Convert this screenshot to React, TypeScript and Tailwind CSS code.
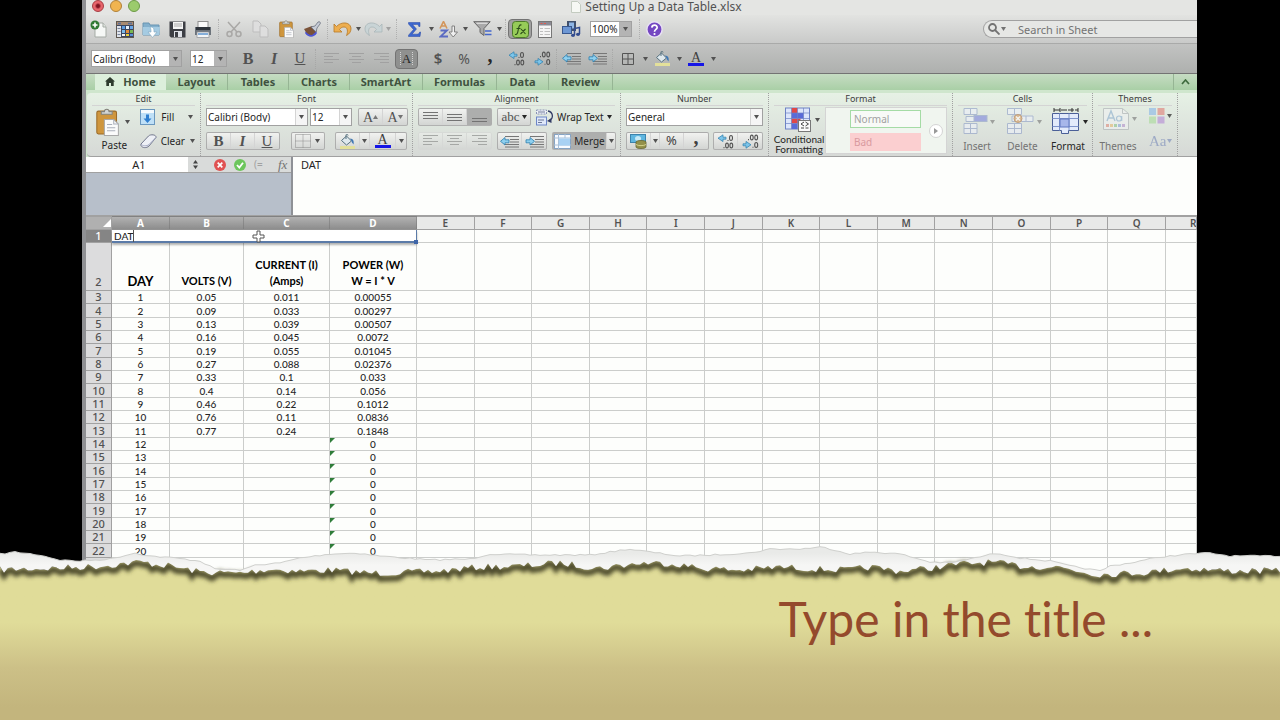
import React from "react";

type Kids = { children?: React.ReactNode };

/* ---------- small building blocks ---------- */

function Caret({ className = "w-2 text-neutral-600" }: { className?: string }) {
  return (
    <span className={`flex shrink-0 items-center justify-center ${className}`}>
      <svg width="5" height="4" viewBox="0 0 5 4" aria-hidden="true">
        <path d="M0 0h5L2.500 4z" fill="currentColor" />
      </svg>
    </span>
  );
}

function Tool({ label, className = "w-[26px]", children }: Kids & { label: string; className?: string }) {
  return (
    <button type="button" aria-label={label} className={`flex h-5 shrink-0 items-center justify-center ${className}`}>
      {children}
    </button>
  );
}

function Rule({ className = "mx-2" }: { className?: string }) {
  return <span className={`h-5 w-0 shrink-0 border-l border-dotted border-neutral-400/70 ${className}`} />;
}

function Combo({
  label,
  value,
  className,
  arrow = "w-3 bg-[#b4b4b4]",
}: {
  label: string;
  value: string;
  className: string;
  arrow?: string;
}) {
  return (
    <label className={`flex shrink-0 border border-neutral-400 bg-white ${className}`}>
      <select
        aria-label={label}
        defaultValue={value}
        className="min-w-0 flex-1 appearance-none bg-white pl-px text-[10px] leading-none text-neutral-800 outline-none"
      >
        <option>{value}</option>
      </select>
      <Caret className={`text-neutral-600 ${arrow}`} />
    </label>
  );
}

function Lines({ rows, className = "text-neutral-500" }: { rows: [number, number, number][]; className?: string }) {
  return (
    <svg width="15" height="14" viewBox="0 0 15 14" className={className} aria-hidden="true">
      {rows.map(([x, y, w]) => (
        <rect key={y} x={x} y={y} width={w} height="1" fill="currentColor" />
      ))}
    </svg>
  );
}

const LEFT: [number, number, number][] = [[0, 1, 15], [0, 4, 9], [0, 7, 15], [0, 10, 9]];
const MIDDLE: [number, number, number][] = [[0, 1, 15], [3, 4, 9], [0, 7, 15], [3, 10, 9]];
const RIGHT: [number, number, number][] = [[0, 1, 15], [6, 4, 9], [0, 7, 15], [6, 10, 9]];

/* ---------- icons ---------- */

function NewDoc() {
  return (
    <svg width="18" height="18" viewBox="0 0 18 18">
      <path d="M5 3h8l3 4v10H5z" fill="#f6f8f6" stroke="#a5aba5" />
      <path d="M13 3v4h3" fill="#dfe5df" stroke="#a5aba5" />
      <circle cx="5" cy="5" r="4.500" fill="#2f7a34" />
      <path d="M5 2.500v5M2.500 5h5" stroke="#fff" strokeWidth="1.600" />
    </svg>
  );
}
function Gallery() {
  return (
    <svg width="18" height="17" viewBox="0 0 18 17">
      <rect x=".5" y=".5" width="17" height="16" fill="#3b4560" stroke="#5d564f" />
      <rect x="1" y="1" width="16" height="3" fill="#a98a70" />
      <path d="M2 2.500h3M12 2.500h4" stroke="#5a6f9c" strokeWidth="1.500" />
      <rect x="1" y="5" width="4" height="11" fill="#dfe3ea" />
      <path d="M1.500 7.500h3M1.500 10.500h3M1.500 13.500h3" stroke="#7b869c" />
      <rect x="6" y="5" width="3" height="3" fill="#5a9be0" />
      <rect x="10" y="5" width="3" height="3" fill="#e8f0fa" />
      <rect x="14" y="5" width="3" height="3" fill="#6aa7e8" />
      <rect x="6" y="9" width="3" height="3" fill="#7ab8ea" />
      <rect x="10" y="9" width="3" height="3" fill="#e08a3a" />
      <rect x="14" y="9" width="3" height="3" fill="#77b752" />
      <rect x="6" y="13" width="3" height="2" fill="#f4f4f4" />
      <rect x="10" y="13" width="3" height="2" fill="#e8cf3b" />
      <rect x="14" y="13" width="3" height="2" fill="#5a8fd8" />
    </svg>
  );
}
function OpenFolder() {
  return (
    <svg width="18" height="17" viewBox="0 0 18 17">
      <path d="M1 14V2h6l1 2h9v10z" fill="#83b0cd" stroke="#6994b2" />
      <path d="M1 6h17l-1 8H1z" fill="#a5cbe2" />
      <path d="M8 6c4 0 4 2 4 5h3l-4.500 5.500L6 11h3c0-2 0-3-1-5z" fill="#fff" stroke="#7fa6c0" strokeWidth=".6" />
    </svg>
  );
}
function Save() {
  return (
    <svg width="17" height="17" viewBox="0 0 17 17">
      <path d="M.5.5h16v16H2L.5 15z" fill="#3d3f45" />
      <rect x="4" y="1" width="10" height="7" fill="#f5f5f5" />
      <path d="M5 3h8M5 5h8" stroke="#a9a9a9" />
      <rect x="5" y="10" width="8" height="6" fill="#dfe2e8" />
      <rect x="6" y="11" width="3" height="5" fill="#3d3f45" />
    </svg>
  );
}
function Printer() {
  return (
    <svg width="18" height="17" viewBox="0 0 18 17">
      <rect x="4" y=".5" width="10" height="7" fill="#fafafa" stroke="#909090" />
      <path d="M1 6h16v8H1z" fill="#6c737b" />
      <path d="M2 6h14v3H2z" fill="#2f343b" />
      <rect x="3" y="11" width="12" height="5.500" fill="#f3f5f7" stroke="#8b8f95" strokeWidth=".7" />
      <path d="M4 13h10" stroke="#5f96d0" strokeWidth="1.500" />
    </svg>
  );
}
function Scissors() {
  return (
    <svg width="16" height="17" viewBox="0 0 16 17" fill="none" stroke="#a9a8a6" strokeWidth="1.500">
      <path d="M2 1l9 10M14 1L5 11" />
      <circle cx="3.500" cy="13" r="2.500" />
      <circle cx="12.500" cy="13" r="2.500" />
    </svg>
  );
}
function Copy() {
  return (
    <svg width="17" height="18" viewBox="0 0 17 18" fill="#dedede" stroke="#bdbdbd">
      <path d="M1 1h5l3 3v8H1z" />
      <path d="M8 6h5l3 3v8H8z" />
    </svg>
  );
}
function Clipboard({ width = 17, height = 18 }: { width?: number; height?: number }) {
  return (
    <svg width={width} height={height} viewBox="0 0 22 27">
      <rect x=".7" y="3" width="19" height="22" rx="1.500" fill="#cf963d" stroke="#9b6b29" />
      <path d="M5 6V3.500h3C8 .500 12.500.500 12.500 3.500h3V6z" fill="#d3d6d6" stroke="#83827a" />
      <path d="M8 11h9l4.500 4.500V26.500H8z" fill="#fbfbfb" stroke="#a9a9a9" />
      <path d="M17 11v4.500h4.500M10.500 16h5M10.500 19h8M10.500 22h8" fill="none" stroke="#aab0bb" />
    </svg>
  );
}
function Painter() {
  return (
    <svg width="18" height="17" viewBox="0 0 18 17">
      <path d="M2 12c3 5 9 5 12 0l-3-5-7 1z" fill="#4d55d4" />
      <path d="M1 8l8-3 5 5-5 4c-3 0-6-2-8-6z" fill="#7a5238" />
      <path d="M8 6l4-1 3-4c2-1 3 1 2 2l-3 4-1 4z" fill="#c7ccd6" stroke="#6a7180" strokeWidth=".8" />
    </svg>
  );
}
function Undo({ color = "#edae50", edge = "#b67827", flip = false }) {
  return (
    <svg width="19" height="14" viewBox="0 0 19 14">
      <path
        transform={flip ? "matrix(-1 0 0 1 19 0)" : undefined}
        d="M1 2l2.500 2.500C8-.5 17-.5 18 6c.3 3-1.500 6-4.500 7.500C15 10 15 5 11 5 9 5 7.500 6 6.500 7.500L9 10H1z"
        fill={color}
        stroke={edge}
        strokeWidth=".8"
      />
    </svg>
  );
}
function Sigma() {
  return (
    <svg width="13" height="15" viewBox="0 0 13 15">
      <path d="M.5.5h11.500v4h-1.200C10.500 3 10 2.500 8.500 2.500H4.500L8.500 7 4 12.200h5c1.500 0 2.200-.6 2.700-2.200h1L12 14.500H.5v-1.300L5.500 7.500.5 2z" fill="#3c67cf" stroke="#2747a4" strokeWidth=".5" />
    </svg>
  );
}
function Sort() {
  return (
    <svg width="19" height="17" viewBox="0 0 19 17">
      <path d="M1 7.500L4.500.5 8 7.500M2.500 5h4" fill="none" stroke="#d3955a" strokeWidth="1.600" />
      <path d="M1.500 9.500H8l-6.500 6H9" fill="none" stroke="#5b6bc2" strokeWidth="1.800" />
      <path d="M13 5h2.500v6h3L14.200 16 10 11h3z" fill="#f0f0f0" stroke="#777" strokeWidth=".9" />
    </svg>
  );
}
function Funnel() {
  return (
    <svg width="19" height="16" viewBox="0 0 19 16">
      <path d="M.7.7h16.500L11 7.500v7L7 11.500v-4z" fill="#a9a9a9" stroke="#666" />
      <path d="M3.500 2.200h11" stroke="#eee" />
      <path d="M12 10h6.500M12 13.500h6.500" stroke="#4567cb" strokeWidth="1.700" />
    </svg>
  );
}
function FormulaTile() {
  return (
    <svg width="17" height="17" viewBox="0 0 17 17">
      <rect x=".5" y=".5" width="16" height="16" rx="3" fill="#96cc58" stroke="#4d7a2b" />
      <path d="M3 13.500c2.500.5 2.700-2 3.300-5S7.300 3.500 9.500 4M4.500 7.500h4M9 8l4.500 5M13.500 8L8.500 13" fill="none" stroke="#2c4d1a" strokeWidth="1.100" />
    </svg>
  );
}
function Toolbox() {
  return (
    <svg width="14" height="17" viewBox="0 0 14 17">
      <rect x=".5" y=".5" width="13" height="16" fill="#f5f5f5" stroke="#777" />
      <rect x="1" y="1" width="12" height="3.500" fill="#8b8a94" />
      <path d="M2.500 2.500h2M6 2.500h2" stroke="#e35b4e" strokeWidth="1.200" />
      <path d="M2 7.500h3M6.500 7.500H12M2 10.500h3M6.500 10.500H12M2 13.500h3M6.500 13.500H12" stroke="#bfbfbf" />
    </svg>
  );
}
function Media() {
  return (
    <svg width="19" height="17" viewBox="0 0 19 17">
      <rect x="5" y="0" width="9" height="10" fill="#40506d" />
      <rect x="7" y="1.500" width="5" height="6" fill="#8fb6e6" />
      <rect x=".5" y="5.500" width="9" height="7" fill="#6d97d4" stroke="#38578e" />
      <path d="M12.500 14V7.500l5-1V13" fill="none" stroke="#334c8f" strokeWidth="1.500" />
      <ellipse cx="11" cy="14.300" rx="2" ry="1.600" fill="#334c8f" />
      <ellipse cx="16" cy="13.300" rx="2" ry="1.600" fill="#334c8f" />
    </svg>
  );
}
function Help() {
  return (
    <svg width="17" height="17" viewBox="0 0 16 16">
      <circle cx="8" cy="8" r="7.200" fill="#7446c2" stroke="#e8e0f4" strokeWidth="1.400" />
      <path d="M5.500 6.200c.2-3.200 5.300-3 5 0C10.300 7.800 8 8 8 10" fill="none" stroke="#fff" strokeWidth="1.600" />
      <circle cx="8" cy="12.200" r="1" fill="#fff" />
    </svg>
  );
}
function Decimal({ more }: { more: boolean }) {
  return (
    <svg width="17" height="15" viewBox="0 0 17 15" aria-hidden="true">
      <path
        d={more ? "M6 .8v2.400h3v2H6v2.400L1 4.200z" : "M4 7.400v2.400H1v2h3v2.400L9 10.800z"}
        fill="#7cc5ea"
        stroke="#2c7eae"
        strokeWidth=".7"
      />
      <g fill="none" stroke="#555" strokeWidth="1.100">
        {more ? (
          <>
            <ellipse cx="14" cy="4" rx="1.500" ry="2.500" />
            <ellipse cx="10" cy="11.500" rx="1.400" ry="2.400" />
            <ellipse cx="14.300" cy="11.500" rx="1.400" ry="2.400" />
            <path d="M10.500 6.500h1M6.500 13.600h1" />
          </>
        ) : (
          <>
            <ellipse cx="9.800" cy="3.500" rx="1.400" ry="2.400" />
            <ellipse cx="14.200" cy="3.500" rx="1.400" ry="2.400" />
            <ellipse cx="14.200" cy="11" rx="1.500" ry="2.500" />
            <path d="M6 5.600h1M10.500 13.200h1" />
          </>
        )}
      </g>
    </svg>
  );
}
function Indent({ out = false }: { out?: boolean }) {
  return (
    <svg width="19" height="13" viewBox="0 0 19 13" aria-hidden="true">
      <path d="M5 1.500h14M10 4.500h9M10 7h9M5 9.500h14M5 12h14" stroke="#777" />
      <path
        d={out ? "M5 2.500v2.300h4v3H5V10L.5 6.300z" : "M5 2.500v2.300H1v3h4V10l4.500-3.700z"}
        fill="#8fd0ef"
        stroke="#2c7eae"
        strokeWidth=".8"
      />
    </svg>
  );
}
function BorderGrid({ dotted = false }: { dotted?: boolean }) {
  return dotted ? (
    <svg width="16" height="14" viewBox="0 0 16 14" fill="none" stroke="#888">
      <path d="M.5.5h15v13H.5zM8 .5v13M.5 7h15" strokeDasharray="1 1" />
    </svg>
  ) : (
    <svg width="12" height="12" viewBox="0 0 12 12" fill="none" stroke="#555">
      <path d="M.5.5h11v11H.5zM6 .5v11M.5 6h11" />
    </svg>
  );
}
function Bucket() {
  return (
    <svg width="17" height="15" viewBox="0 0 17 15">
      <path d="M2.500 6.500l5-4.500 5 5-5 4z" fill="#dfe9ee" stroke="#56707e" />
      <path d="M7 5V1c0-1 2-1 2 .5" fill="none" stroke="#56707e" />
      <path d="M11 4.500c4 0 4 4 3.500 6-1-1.500-2-2-2-3.500z" fill="#3f78b5" />
      <rect x="1" y="12" width="15" height="3" fill="#e3e09a" />
    </svg>
  );
}
function FontColor() {
  return (
    <span className="flex flex-col items-center font-['Liberation_Serif',serif] text-[14px] leading-[11px] text-neutral-700">
      A
      <span className="h-[3px] w-4 bg-[#1616e6]" />
    </span>
  );
}
function Eraser() {
  return (
    <svg width="17" height="15" viewBox="0 0 17 15">
      <path d="M1 10L8.500 2c2-2 8-1.500 7.500 1.500L9 12c-3 3-9 1.500-8-2z" fill="#eef0f6" stroke="#70758a" />
      <path d="M1 10c1 2 6 2.500 8 .5l7-7" fill="none" stroke="#a4abc4" />
    </svg>
  );
}
function FillDown() {
  return (
    <svg width="15" height="16" viewBox="0 0 15 16">
      <rect x=".5" y=".5" width="14" height="15" fill="#bfe0f7" stroke="#6b98bf" />
      <rect x="1" y="1" width="13" height="3" fill="#f5fafd" />
      <path d="M6 5.500h3v4h2.500l-4 4.500-4-4.500H6z" fill="#2f7fd0" />
    </svg>
  );
}
function Wrap() {
  return (
    <svg width="18" height="17" viewBox="0 0 18 17">
      <path d="M.5 1h10v4H.5z" fill="#f1f3fa" stroke="#8993b5" strokeDasharray="2 1" />
      <rect x=".5" y="8" width="10" height="8" fill="#dfe8f9" stroke="#6d86c8" />
      <path d="M2 3h7M2 11h6M2 13.500h4" stroke="#6d7898" />
      <path d="M12 2c5 1 6 7 1.500 9.500" fill="none" stroke="#333c66" strokeWidth="1.300" />
      <path d="M11 12l4.500-3v5z" fill="#333c66" />
    </svg>
  );
}
function MergeCells() {
  return (
    <svg width="17" height="15" viewBox="0 0 17 15">
      <rect x=".5" y=".5" width="16" height="14" fill="#f8fbff" stroke="#86a4c4" />
      <path d="M4.500 0v15M11 0v4M0 4h17M0 11h17" stroke="#a9c0d8" />
      <rect x="5" y="4.500" width="11" height="7" fill="#a8d1f3" />
    </svg>
  );
}
function Currency() {
  return (
    <svg width="17" height="15" viewBox="0 0 17 15">
      <rect x=".5" y=".5" width="15" height="8" fill="#5fb6e0" stroke="#3c83ad" />
      <ellipse cx="8" cy="4.500" rx="3" ry="2.500" fill="#c7eaf8" />
      <path d="M6 8c0-2 10-2 10 0v5c0 2-10 2-10 0z" fill="#94914b" stroke="#666433" strokeWidth=".8" />
      <path d="M6 10.500c2 1.500 8 1.500 10 0" fill="none" stroke="#d4d18a" />
    </svg>
  );
}
function Conditional() {
  return (
    <svg width="27" height="25" viewBox="0 0 27 25">
      <rect x=".5" y="1" width="24" height="21" fill="#dde6fb" stroke="#6e82c4" />
      <rect x="6.500" y="1" width="6" height="5" fill="#e04848" />
      <rect x="6.500" y="6" width="12" height="5.500" fill="#5a6bd8" />
      <rect x="6.500" y="11.500" width="9" height="5" fill="#e04848" />
      <rect x="6.500" y="16.500" width="6" height="5.500" fill="#5a6bd8" />
      <path d="M6.500 1v21M12.500 1v21M18.500 1v21M.5 6h24M.5 11.500h24M.5 16.500h24" stroke="#6e82c4" strokeWidth=".7" />
      <rect x="13.500" y="13.500" width="12" height="11" fill="#fafafa" stroke="#777" />
      <path d="M19 15l-3 2 3 2M16 21h3M20.500 15l3 2-3 2M20.500 21h3" fill="none" stroke="#444" />
    </svg>
  );
}
function InsertCells() {
  return (
    <svg width="25" height="27" viewBox="0 0 25 27" fill="#eef1fa" stroke="#8b9cc6">
      <path d="M1 .5h13v6H1zM7.500.5v6M1 15.500h13v10H1zM7.500 15.500v10M1 20.500h13" />
      <path d="M3 8.500h9v5H3z" />
      <rect x="11" y="7.500" width="13" height="6" fill="#7c84dc" />
    </svg>
  );
}
function DeleteCells() {
  return (
    <svg width="27" height="27" viewBox="0 0 27 27" fill="#eef1fa" stroke="#8b9cc6">
      <path d="M.5.5h14v6H.5zM7.500.5v6M.5 15.500h14v10H.5zM7.500 15.500v10M.5 20.500h14" />
      <path d="M5 8h21v5.500H5zM19 8v5.500" />
      <circle cx="11" cy="10.500" r="4" fill="#d9995f" stroke="#a8703e" />
      <path d="M9 8.500l4 4M13 8.500l-4 4" stroke="#fff" strokeWidth="1.300" />
    </svg>
  );
}
function FormatCells() {
  return (
    <svg width="28" height="27" viewBox="0 0 28 27">
      <path d="M2 2h24M2 0v4M26 0v4M8 0v4M20 0v4" stroke="#333" strokeDasharray="6 1" />
      <path d="M.5 5.500h26v17h-10v3h-7v-3h-9z" fill="#e3ebfb" stroke="#4b5f97" />
      <path d="M7.500 5.500v17M17 5.500v17M.5 10.500h26M.5 18.500h26" stroke="#7f95cb" />
      <rect x="8" y="11" width="9" height="8" fill="#a7b7ea" stroke="#5f77c0" />
    </svg>
  );
}
function ThemeSheet() {
  return (
    <svg width="27" height="22" viewBox="0 0 27 22">
      <path d="M.5.5h19l6 5v16H.5z" fill="#f0f2f3" stroke="#a9aeb3" />
      <path d="M19.500.5v5h6" fill="none" stroke="#a9aeb3" />
      <path d="M4 13L8 3l4 10M5.500 10h5" fill="none" stroke="#8caed0" strokeWidth="1.400" />
      <circle cx="16" cy="10.500" r="2.500" fill="none" stroke="#8caed0" strokeWidth="1.200" />
      <path d="M18.700 8v5" stroke="#8caed0" strokeWidth="1.200" />
      <path d="M3 17.500h3" stroke="#df8c7f" strokeWidth="3" />
      <path d="M7 17.500h3" stroke="#e6bb73" strokeWidth="3" />
      <path d="M11 17.500h3" stroke="#8dc48b" strokeWidth="3" />
      <path d="M15 17.500h3" stroke="#8aa5da" strokeWidth="3" />
      <path d="M19 17.500h3" stroke="#b693cf" strokeWidth="3" />
    </svg>
  );
}
function ThemeColors() {
  return (
    <svg width="16" height="16" viewBox="0 0 16 16">
      <rect width="7" height="7" fill="#94bde6" />
      <rect x="8.500" width="7" height="7" fill="#e08c84" />
      <rect y="8.500" width="7" height="7" fill="#b0dca3" />
      <rect x="8.500" y="8.500" width="7" height="7" fill="#ba96d6" />
    </svg>
  );
}

/* ---------- window chrome ---------- */

function TitleBar() {
  return (
    <header className="flex h-[15px] items-center bg-[#e4e5e3] pr-9 pl-[6px] text-[12px] leading-[14px] text-neutral-600">
      <div className="flex w-[60px] gap-[6px] pb-1">
        <button type="button" aria-label="Close" className="size-3 rounded-full border border-[#a63a40] bg-[radial-gradient(circle,#7e1220_20%,#e8656c_45%)]" />
        <button type="button" aria-label="Minimise" className="size-3 rounded-full border border-[#b0813a] bg-[#f0b450]" />
        <button type="button" aria-label="Zoom" className="size-3 rounded-full border border-[#6c9a47] bg-[#9bcb6c]" />
      </div>
      <h1 className="flex flex-1 items-center justify-center gap-1 pb-px">
        <svg width="10" height="12" viewBox="0 0 10 12">
          <path d="M.5.5h6l3 3v8h-9z" fill="#f6f8f4" stroke="#c3cbc0" />
        </svg>
        Setting Up a Data Table.xlsx
      </h1>
    </header>
  );
}

function StandardToolbar() {
  return (
    <div role="toolbar" aria-label="Standard" className="flex h-7 items-center bg-linear-to-b from-[#e2e3e1] to-[#c9cac9]">
      <Tool label="New"><NewDoc /></Tool>
      <Tool label="Gallery"><Gallery /></Tool>
      <Tool label="Open"><OpenFolder /></Tool>
      <Tool label="Save"><Save /></Tool>
      <Tool label="Print"><Printer /></Tool>
      <Rule className="mx-[2px]" />
      <Tool label="Cut"><Scissors /></Tool>
      <Tool label="Copy"><Copy /></Tool>
      <Tool label="Paste"><Clipboard /></Tool>
      <Tool label="Format painter"><Painter /></Tool>
      <Rule className="mx-[2px]" />
      <Tool label="Undo" className="w-6"><Undo /></Tool>
      <Caret />
      <Tool label="Redo" className="w-[22px]"><Undo color="#c9d4d6" edge="#aab6b9" flip /></Tool>
      <Caret className="w-2 text-neutral-400" />
      <Rule className="mx-1" />
      <Tool label="AutoSum"><Sigma /></Tool>
      <Caret />
      <Tool label="Sort"><Sort /></Tool>
      <Caret />
      <Tool label="Filter"><Funnel /></Tool>
      <Caret />
      <Rule className="mx-[2px]" />
      <Tool label="Formula builder" className="w-6 rounded-sm border border-neutral-500 bg-neutral-400"><FormulaTile /></Tool>
      <Tool label="Toolbox"><Toolbox /></Tool>
      <Tool label="Media browser"><Media /></Tool>
      <Combo label="Zoom level" value="100%" className="mx-[6px] h-4 w-[42px]" />
      <Rule className="mx-px" />
      <Tool label="Help"><Help /></Tool>
      <label className="ml-auto flex h-[18px] w-[214px] items-center rounded-l-full border border-r-0 border-neutral-400 bg-[#e6e7e5] pl-1 text-neutral-500">
        <svg width="12" height="12" viewBox="0 0 12 12" fill="none" stroke="currentColor" strokeWidth="1.800">
          <circle cx="4.500" cy="4.500" r="3.500" />
          <path d="M7 7l4.500 4.500" />
        </svg>
        <Caret className="mr-3 w-[6px]" />
        <input type="search" aria-label="Search in Sheet" placeholder="Search in Sheet" className="min-w-0 flex-1 bg-transparent text-[11px] leading-none outline-none placeholder:text-neutral-500" />
      </label>
    </div>
  );
}

function FormatToolbar() {
  return (
    <div role="toolbar" aria-label="Formatting" className="flex h-[30px] items-center border-t border-[#a9aaa9] bg-linear-to-b from-[#c2c3c2] to-[#aeb0ae] pl-[5px] text-neutral-600">
      <Combo label="Font" value="Calibri (Body)" className="mr-2 h-[17px] w-[91px]" />
      <Combo label="Font size" value="12" className="mr-2 h-[17px] w-[37px]" />
      <Tool label="Bold"><b className="font-['Liberation_Serif',serif] text-[16px]">B</b></Tool>
      <Tool label="Italic"><i className="font-['Liberation_Serif',serif] text-[16px] font-bold">I</i></Tool>
      <Tool label="Underline"><u className="font-['Liberation_Serif',serif] text-[15px]">U</u></Tool>
      <Rule className="mx-[2px]" />
      <Tool label="Align left"><Lines rows={LEFT} className="text-neutral-400" /></Tool>
      <Tool label="Align centre" className="w-6"><Lines rows={MIDDLE} className="text-neutral-400" /></Tool>
      <Tool label="Align right"><Lines rows={RIGHT} className="text-neutral-400" /></Tool>
      <Tool label="Merge across" className="mr-[7px] ml-px w-[23px] rounded-sm border border-neutral-500 bg-[#8f908f]">
        <span className="border-x border-dotted border-neutral-300 px-px font-['Liberation_Serif',serif] text-[13px] leading-none text-neutral-800">A</span>
      </Tool>
      <Tool label="Currency"><span className="text-[15px] font-semibold">$</span></Tool>
      <Tool label="Percent"><span className="text-[14px]">%</span></Tool>
      <Tool label="Comma"><b className="pb-2 font-['Liberation_Serif',serif] text-[20px] leading-[8px] text-neutral-800">,</b></Tool>
      <Tool label="Increase decimal"><Decimal more /></Tool>
      <Tool label="Decrease decimal"><Decimal more={false} /></Tool>
      <Rule className="mx-px" />
      <Tool label="Decrease indent"><Indent out /></Tool>
      <Tool label="Increase indent"><Indent /></Tool>
      <Rule className="mx-[2px]" />
      <Tool label="Borders"><BorderGrid /></Tool>
      <Caret />
      <Tool label="Fill colour"><Bucket /></Tool>
      <Caret />
      <Tool label="Font colour"><FontColor /></Tool>
      <Caret />
    </div>
  );
}

const TABS: [string, string][] = [
  ["Layout", "w-[62px]"],
  ["Tables", "w-[61px]"],
  ["Charts", "w-[61px]"],
  ["SmartArt", "w-[73px]"],
  ["Formulas", "w-[74px]"],
  ["Data", "w-[52px]"],
  ["Review", "w-[64px]"],
];

function RibbonTabs() {
  return (
    <nav className="flex h-[17px] border-t border-neutral-500 bg-linear-to-b from-[#c6dcc3] to-[#a9cfa6] pl-[9px] text-[11px] leading-none font-bold text-[#40523f]">
      <button type="button" className="flex w-[71px] items-center justify-center gap-2 bg-[#dcefdb] pb-[2px]">
        <svg width="10" height="9" viewBox="0 0 10 9">
          <path d="M5 0l5 4.500H8.700V9H6V6H4v3H1.300V4.500H0z" fill="#2e3b2e" />
        </svg>
        Home
      </button>
      {TABS.map(([name, width]) => (
        <button key={name} type="button" className={`border-r border-[#96b594] pb-[2px] ${width}`}>
          {name}
        </button>
      ))}
      <button type="button" aria-label="Collapse ribbon" className="ml-auto flex w-6 items-center justify-center border-l border-[#96b594]">
        <svg width="9" height="6" viewBox="0 0 9 6">
          <path d="M1 5l3.500-4L8 5" fill="none" stroke="#3f6b3e" strokeWidth="1.700" />
        </svg>
      </button>
    </nav>
  );
}

/* ---------- ribbon ---------- */

function Group({ title, className, children }: Kids & { title: string; className: string }) {
  return (
    <section className={`flex shrink-0 flex-col border-r border-dotted border-neutral-400 px-[5px] ${className}`}>
      <h2 className="mb-[2px] h-[13px] border-b border-neutral-300 text-center text-[9px] leading-[12px] text-neutral-700">{title}</h2>
      {children}
    </section>
  );
}

function Split({ label, className = "w-6", on = false, children }: Kids & { label: string; className?: string; on?: boolean }) {
  return (
    <button
      type="button"
      aria-label={label}
      className={`flex h-4 shrink-0 items-center justify-center border-r border-neutral-300 last:border-r-0 ${on ? "bg-[#adaead]" : ""} ${className}`}
    >
      {children}
    </button>
  );
}

function Cluster({ children, dim = false }: Kids & { dim?: boolean }) {
  return (
    <div className={`flex shrink-0 rounded-xs border bg-linear-to-b from-[#f1f2f0] to-[#d3d5d3] ${dim ? "border-neutral-300 opacity-50" : "border-neutral-400/80"}`}>
      {children}
    </div>
  );
}

function Tall({ label, dim = false, className, children }: Kids & { label: string; dim?: boolean; className: string }) {
  return (
    <button type="button" className={`flex h-11 shrink-0 flex-col items-center justify-between text-[10px] leading-[12px] ${dim ? "text-neutral-500" : "text-neutral-800"} ${className}`}>
      <span className={`flex items-center gap-[2px] pl-1 ${dim ? "opacity-60" : ""}`}>
        {children}
        <Caret className="w-[6px]" />
      </span>
      {label}
    </button>
  );
}

function Ribbon() {
  return (
    <div className="bg-[#cfe6cd] pt-[3px] pl-px">
      <div className="flex h-[64px] overflow-hidden rounded-l-sm border-b border-neutral-400 bg-linear-to-b from-[#e6f1e5] to-[#d6d9d6] text-[10px] text-neutral-800">
        <Group title="Edit" className="w-[114px]">
          <div className="flex gap-2 pl-1">
            <button type="button" className="flex w-[38px] flex-col leading-[14px]">
              <span className="flex items-center gap-1"><Clipboard width={23} height={28} /><Caret /></span>
              <span className="pt-[2px] pl-px">Paste</span>
            </button>
            <div className="flex flex-col gap-2 pt-px">
              <button type="button" className="flex h-4 items-center gap-1"><FillDown />&nbsp;Fill<Caret className="ml-2 w-2 text-neutral-600" /></button>
              <button type="button" className="flex h-4 items-center gap-1"><Eraser />Clear<Caret className="w-[6px] text-neutral-600" /></button>
            </div>
          </div>
        </Group>

        <Group title="Font" className="w-[212px]">
          <div className="mb-[6px] flex">
            <Combo label="Ribbon font" value="Calibri (Body)" className="mr-[2px] h-[18px] w-[102px]" arrow="w-3 border-l border-neutral-300 bg-neutral-100" />
            <Combo label="Ribbon font size" value="12" className="mr-[6px] h-[18px] w-[42px]" arrow="w-3 border-l border-neutral-300 bg-neutral-100" />
            <Cluster>
              <Split label="Grow font"><span className="font-['Liberation_Serif',serif] text-[14px] text-neutral-600">A</span><svg width="5" height="4" viewBox="0 0 5 4"><path d="M0 4h5L2.500 0z" fill="#777" /></svg></Split>
              <Split label="Shrink font"><span className="font-['Liberation_Serif',serif] text-[14px] text-neutral-600">A</span><Caret className="w-[5px] text-neutral-500" /></Split>
            </Cluster>
          </div>
          <div className="flex justify-between font-['Liberation_Serif',serif] text-[15px] text-neutral-600">
            <Cluster>
              <Split label="Bold text"><b>B</b></Split>
              <Split label="Italic text"><i className="font-bold">I</i></Split>
              <Split label="Underline text"><u>U</u></Split>
            </Cluster>
            <Cluster>
              <Split label="Cell borders" className="w-8 gap-1"><BorderGrid dotted /><Caret className="w-[5px]" /></Split>
            </Cluster>
            <Cluster>
              <Split label="Cell fill"><Bucket /></Split>
              <Split label="Cell fill menu" className="w-[10px]"><Caret /></Split>
              <Split label="Text colour" className="w-[26px]"><FontColor /></Split>
              <Split label="Text colour menu" className="w-[10px]"><Caret /></Split>
            </Cluster>
          </div>
        </Group>

        <Group title="Alignment" className="w-[208px]">
          <div className="mb-[6px] flex h-[18px] items-center gap-[5px]">
            <Cluster>
              <Split label="Top"><Lines rows={[[0, 2, 15], [0, 5, 15], [0, 8, 15]]} /></Split>
              <Split label="Middle"><Lines rows={[[0, 4, 15], [0, 7, 15], [0, 10, 15]]} /></Split>
              <Split label="Bottom" on><Lines rows={[[0, 8, 15], [0, 11, 15]]} /></Split>
            </Cluster>
            <Cluster>
              <Split label="Orientation" className="w-8 gap-[2px]"><span className="font-['Liberation_Serif',serif] text-[13px] text-neutral-600">abc</span><Caret className="w-[5px]" /></Split>
            </Cluster>
            <button type="button" className="flex items-center gap-[3px] whitespace-nowrap"><Wrap />Wrap Text<Caret className="w-[6px]" /></button>
          </div>
          <div className="flex items-center gap-[5px]">
            <Cluster dim>
              <Split label="Left"><Lines rows={LEFT} /></Split>
              <Split label="Centre"><Lines rows={MIDDLE} /></Split>
              <Split label="Right"><Lines rows={RIGHT} /></Split>
            </Cluster>
            <Cluster>
              <Split label="Outdent"><Indent out /></Split>
              <Split label="Indent"><Indent /></Split>
            </Cluster>
            <Cluster>
              <Split label="Merge" on className="w-[54px] gap-[3px]"><MergeCells />Merge</Split>
              <Split label="Merge menu" className="w-2"><Caret /></Split>
            </Cluster>
          </div>
        </Group>

        <Group title="Number" className="w-[148px]">
          <Combo label="Number format" value="General" className="mb-[6px] h-[18px] w-full" arrow="w-3 border-l border-neutral-300 bg-neutral-100" />
          <div className="flex justify-between text-neutral-700">
            <Cluster>
              <Split label="Accounting"><Currency /></Split>
              <Split label="Accounting menu" className="w-[9px]"><Caret /></Split>
              <Split label="Percent style"><span className="text-[13px]">%</span></Split>
              <Split label="Comma style"><b className="pb-2 font-['Liberation_Serif',serif] text-[20px] leading-[8px]">,</b></Split>
            </Cluster>
            <Cluster>
              <Split label="More decimals"><Decimal more /></Split>
              <Split label="Fewer decimals"><Decimal more={false} /></Split>
            </Cluster>
          </div>
        </Group>

        <Group title="Format" className="w-[184px]">
          <div className="-mt-px flex items-start justify-between">
            <button type="button" className="flex w-[50px] flex-col items-center font-['Lato',sans-serif] leading-[10px]">
              <span className="flex items-center gap-[2px] pb-[2px] pl-2"><Conditional /><Caret /></span>
              Conditional
              <br />
              Formatting
            </button>
            <div className="flex h-[47px] w-[122px] items-center justify-end gap-2 border border-neutral-300 bg-[#f0f5ef] pr-[3px]">
              <div className="flex flex-col gap-[5px] text-neutral-400">
                <button type="button" className="h-[18px] w-[71px] border border-[#a5dba5] bg-[#f8faf7] pl-[3px] text-left">Normal</button>
                <button type="button" className="h-[18px] w-[71px] bg-[#fbcfd0] pl-1 text-left text-[#d99a9f]">Bad</button>
              </div>
              <button type="button" aria-label="More styles" className="flex size-[14px] items-center justify-center rounded-full border border-neutral-300 bg-white">
                <svg width="4" height="6" viewBox="0 0 4 6"><path d="M0 0l4 3-4 3z" fill="#999" /></svg>
              </button>
            </div>
          </div>
        </Group>

        <Group title="Cells" className="w-[140px]">
          <div className="flex justify-between">
            <Tall label="Insert" dim className="w-[38px]"><InsertCells /></Tall>
            <Tall label="Delete" dim className="w-[42px]"><DeleteCells /></Tall>
            <Tall label="Format" className="w-[38px]"><FormatCells /></Tall>
          </div>
        </Group>

        <Group title="Themes" className="w-[85px]">
          <div className="flex justify-between">
            <Tall label="Themes" dim className="w-[40px]"><ThemeSheet /></Tall>
            <div className="flex flex-col items-start gap-2 opacity-70">
              <button type="button" aria-label="Theme colours" className="flex items-center gap-[2px]"><ThemeColors /><Caret className="w-[5px]" /></button>
              <button type="button" aria-label="Theme fonts" className="flex items-center font-['Liberation_Serif',serif] text-[15px] leading-[18px] text-[#8494bd]">Aa<Caret className="w-[5px]" /></button>
            </div>
          </div>
        </Group>
      </div>
    </div>
  );
}

/* ---------- formula bar ---------- */

function FormulaBar() {
  return (
    <div className="flex h-[59px] border-b border-neutral-400 bg-[#b7bfca]">
      <div className="w-[207px] shrink-0 border-r-2 border-neutral-500/60">
        <div className="flex h-4 items-center border-b border-neutral-400 bg-[#d9dbda]">
          <input aria-label="Name box" defaultValue="A1" className="h-full w-[102px] bg-white pl-1 text-center text-[11px] text-neutral-800 outline-none" />
          <button type="button" aria-label="Names" className="flex w-[15px] justify-center">
            <svg width="5" height="9" viewBox="0 0 5 9"><path d="M0 3.500h5L2.500 0zM0 5.500h5L2.500 9z" fill="#444" /></svg>
          </button>
          <button type="button" aria-label="Cancel" className="ml-[11px]">
            <svg width="12" height="12" viewBox="0 0 12 12"><circle cx="6" cy="6" r="6" fill="#e05252" /><path d="M3.700 3.700l4.600 4.600M8.300 3.700L3.700 8.300" stroke="#fff" strokeWidth="1.700" /></svg>
          </button>
          <button type="button" aria-label="Enter" className="ml-2">
            <svg width="12" height="12" viewBox="0 0 12 12"><circle cx="6" cy="6" r="6" fill="#6cc65c" /><path d="M3 6l2.300 2.500L9 3.700" fill="none" stroke="#fff" strokeWidth="1.800" /></svg>
          </button>
          <span className="ml-2 w-6 text-[10px] text-neutral-400">(=</span>
          <i className="font-['Liberation_Serif',serif] text-[13px] leading-none text-neutral-500">fx</i>
        </div>
      </div>
      <textarea aria-label="Formula" defaultValue="DAT" className="min-w-0 flex-1 resize-none bg-[#fdfefc] px-2 text-[11px] leading-[16px] text-neutral-800 outline-none" />
    </div>
  );
}

/* ---------- sheet ---------- */

const READINGS: [string, string, string][] = [
  ["0.05", "0.011", "0.00055"],
  ["0.09", "0.033", "0.00297"],
  ["0.13", "0.039", "0.00507"],
  ["0.16", "0.045", "0.0072"],
  ["0.19", "0.055", "0.01045"],
  ["0.27", "0.088", "0.02376"],
  ["0.33", "0.1", "0.033"],
  ["0.4", "0.14", "0.056"],
  ["0.46", "0.22", "0.1012"],
  ["0.76", "0.11", "0.0836"],
  ["0.77", "0.24", "0.1848"],
];
const ROWS = Array.from({ length: 20 }, (_, i) => READINGS[i] ?? ["", "", "0"]);
const EMPTY = "EFGHIJKLMNOPQR".split("");

function RowHead({ n, active = false, className = "p-0" }: { n?: number; active?: boolean; className?: string }) {
  return (
    <th
      scope="row"
      className={`border-r border-b border-neutral-400 align-bottom font-['Noto_Sans',sans-serif] text-[11px] leading-[12px] font-medium ${className} ${
        active ? "bg-[#858585] text-white" : "bg-[#dcdcdd] text-neutral-600"
      }`}
    >
      {n}
    </th>
  );
}

function Blank() {
  return (
    <>
      {EMPTY.map((c) => (
        <td key={c} className="border-r border-b border-[#cbcdcb] p-0" />
      ))}
    </>
  );
}

function Sheet() {
  const cell = "relative border-r border-b border-[#cbcdcb] p-0 text-center";
  const heading = "border-r border-b border-[#cbcdcb] px-0 pt-0 pb-px text-center";
  return (
    <table className="w-full table-fixed border-separate border-spacing-0 bg-[#fdfefc] font-['Lato','Liberation_Sans',sans-serif] text-[10px] leading-[12px] font-medium text-neutral-800">
      <colgroup>
        <col className="w-[26px]" />
        <col className="w-[58px]" />
        <col className="w-[74px]" />
        <col className="w-[86px]" />
        <col className="w-[87px]" />
        {EMPTY.map((c) => (
          <col key={c} className={c === "R" ? "w-[31px]" : ""} />
        ))}
      </colgroup>
      <thead className="font-['Noto_Sans',sans-serif] text-[10px] leading-[12px]">
        <tr className="h-[14px]">
          <th aria-label="Select all" className="border-y border-r border-neutral-400 bg-[#b0b0b0] p-0">
            <svg width="8" height="8" viewBox="0 0 8 8" className="ml-auto"><path d="M8 0v8H0z" fill="#fff" /></svg>
          </th>
          {"ABCD".split("").map((c) => (
            <th key={c} scope="col" className="border-y border-r border-neutral-500/50 bg-linear-to-b from-[#b2b2b2] to-[#8d8d8d] p-0 font-bold text-white">{c}</th>
          ))}
          {EMPTY.map((c) => (
            <th key={c} scope="col" className={`overflow-hidden border-y border-r border-neutral-400 bg-[#e8e9e8] p-0 font-semibold text-neutral-600 ${c === "R" ? "pl-6 text-left" : ""}`}>{c}</th>
          ))}
        </tr>
      </thead>
      <tbody>
        <tr className="h-[13px]">
          <RowHead n={1} active />
          <td colSpan={4} className="relative border-r border-b-2 border-[#5b7ba8] bg-white p-0 shadow-[0_2px_2px_rgba(0,0,0,0.3)]">
            <input aria-label="Cell A1" defaultValue="DAT" className="block h-[11px] w-full bg-transparent pl-[2px] text-[10px] leading-none outline-none" />
            <span className="absolute top-0 left-[21px] h-[12px] w-px bg-neutral-600" />
            <span className="absolute -right-[2px] -bottom-[3px] size-1 bg-[#3f66a8]" />
            <svg width="13" height="13" viewBox="0 0 13 13" className="absolute top-0 left-[140px]">
              <path d="M5 1h3v4h4v3H8v4H5V8H1V5h4z" fill="#fff" stroke="#555" />
            </svg>
          </td>
          <Blank />
        </tr>
        <tr className="h-12 align-bottom text-[11px] leading-4 font-bold text-black">
          <RowHead n={2} className="px-0 pt-0 pb-[2px]" />
          <td className={`${heading} text-[13px]`}>DAY</td>
          <td className={heading}>VOLTS (V)</td>
          <td className={heading}>CURRENT (I)<br />(Amps)</td>
          <td className={heading}>POWER (W)<br />W = I * V</td>
          <Blank />
        </tr>
        {ROWS.map(([volts, current, power], i) => (
          <tr key={i} className={i % 3 === 1 ? "h-[14px]" : "h-[13px]"}>
            <RowHead n={i + 3} />
            <td className={cell}>{i + 1}</td>
            <td className={cell}>{volts}</td>
            <td className={cell}>{current}</td>
            <td className={cell}>
              {volts === "" && (
                <svg width="5" height="5" viewBox="0 0 5 5" className="absolute top-0 left-0"><path d="M0 0h5L0 5z" fill="#2f7d3a" /></svg>
              )}
              {power}
            </td>
            <Blank />
          </tr>
        ))}
        <tr className="h-5">
          <RowHead />
          <td className={cell} />
          <td className={cell} />
          <td className={cell} />
          <td className={cell} />
          <Blank />
        </tr>
      </tbody>
    </table>
  );
}

/* ---------- torn paper caption ---------- */

const TOP_EDGE: [number, number][] = [
  [0, 14], [15, 12], [40, 15], [60, 20], [80, 21], [110, 19], [135, 13], [150, 16], [175, 18], [200, 21], [215, 29], [243, 30], [255, 25], [280, 23],
  [300, 18], [330, 14], [357, 13], [380, 16], [430, 20], [470, 19], [490, 14], [530, 15], [590, 15], [610, 12], [628, 9], [650, 12], [680, 16], [710, 15],
  [750, 13], [770, 9], [800, 9], [822, 7], [835, 10], [850, 14], [873, 12], [900, 14], [930, 22], [950, 23], [970, 19], [997, 13], [1020, 18],
  [1050, 21], [1070, 26], [1100, 31], [1110, 26], [1130, 23], [1160, 17], [1190, 14], [1210, 13], [1230, 16], [1280, 16],
];
const TEAR: [number, number][] = [
  [0, 30], [20, 29], [60, 28], [100, 26], [140, 22], [170, 26], [200, 32], [240, 33], [270, 29], [300, 31], [330, 30], [370, 33], [420, 32], [440, 31],
  [480, 27], [520, 26], [560, 23], [600, 28], [640, 23], [670, 23], [700, 28], [740, 30], [780, 27], [820, 29], [850, 30], [870, 27], [900, 31], [930, 28],
  [960, 24], [990, 22], [1020, 26], [1060, 27], [1095, 34], [1110, 34], [1150, 32], [1180, 28], [1230, 31], [1280, 31],
];

function jag(points: [number, number][], step: number, depth: number): string[] {
  const out: string[] = [];
  let seed = 7;
  let k = 0;
  for (let x = 0; x <= 1280; x += step) {
    while (k < points.length - 2 && points[k + 1][0] < x) k++;
    const [x0, y0] = points[k];
    const [x1, y1] = points[k + 1];
    seed = (seed * 16807) % 2147483647;
    const noise = (seed / 2147483647 - 0.5) * depth;
    out.push(`${x} ${(y0 + ((y1 - y0) * (x - x0)) / (x1 - x0) + noise).toFixed(1)}`);
  }
  return out;
}

function TornEdge() {
  const top = jag(TOP_EDGE, 5, 1.5);
  const tear = jag(TEAR, 4, 7);
  const line = `M${tear.join("L")}`;
  return (
    <svg viewBox="0 0 1280 50" preserveAspectRatio="none" className="absolute bottom-[130px] left-0 h-[50px] w-full" aria-hidden="true">
      <defs>
        <filter id="soft" x="-5%" y="-50%" width="110%" height="200%"><feGaussianBlur stdDeviation="2" /></filter>
        <linearGradient id="paper" x1="0" y1="0" x2="0" y2="1">
          <stop offset="0.2" stopColor="#e9eae8" />
          <stop offset="0.6" stopColor="#f6f6f5" />
        </linearGradient>
      </defs>
      <path d={`${line}L1280 50L0 50Z`} fill="#e0dc99" />
      <path d={line} transform="translate(0 3)" fill="none" stroke="#4b482a" strokeWidth="6" filter="url(#soft)" />
      <path d={`M${top.join("L")}L${tear.slice().reverse().join("L")}Z`} fill="url(#paper)" />
      <path d={`M${top.join("L")}`} fill="none" stroke="#cfd0cd" strokeWidth="1" />
    </svg>
  );
}

export default function App() {
  return (
    <main className="flex h-screen flex-col overflow-hidden bg-black font-['Noto_Sans','Liberation_Sans',sans-serif]">
      <div className="min-h-0 flex-1 overflow-hidden pr-[83px] pl-[82px]">
        <div className="h-full border-l-4 border-[#8f9093] bg-white">
          <TitleBar />
          <StandardToolbar />
          <FormatToolbar />
          <RibbonTabs />
          <Ribbon />
          <FormulaBar />
          <Sheet />
        </div>
      </div>
      <footer className="relative flex h-[130px] shrink-0 justify-end bg-linear-to-b from-[#e0dc99] from-25% via-[#ccc087] via-60% to-[#c3b57d] to-90% pr-[127px]">
        <TornEdge />
        <p className="font-['Lato',sans-serif] text-[48px] leading-[58px] text-[#944a2c] [font-variant-ligatures:none]">Type in the title ...</p>
      </footer>
    </main>
  );
}
